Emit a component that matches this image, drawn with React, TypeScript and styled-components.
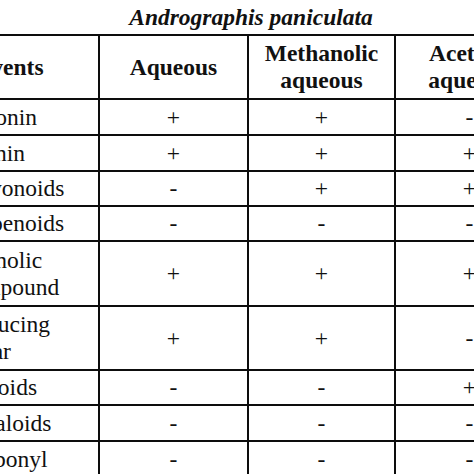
import React from "react";
import styled, { createGlobalStyle } from "styled-components";

const GlobalStyle = createGlobalStyle`
  html, body {
    margin: 0;
    padding: 0;
    background: #ffffff;
    overflow: hidden;
  }
  body {
    font-family: "Liberation Serif", "Times New Roman", serif;
    color: #111;
  }
`;

const Page = styled.div`
  width: 596px;
  margin-left: -51px;
`;

const Title = styled.div`
  height: 34px;
  line-height: 34px;
  padding-left: 8px;
  text-align: center;
  font-size: 23.5px;
  font-weight: 700;
  font-style: italic;
  white-space: nowrap;
`;

const Grid = styled.div`
  display: grid;
  grid-template-columns: 147px 147px 145px 147px;
  grid-template-rows: 62px 34px 34px 33px 33px 63px 62px 33px 34px 34px;
  gap: 2px;
  padding: 2px;
  background: #0d0d0d;
`;

const Cell = styled.div<{ $align?: "left" | "center"; $bold?: boolean }>`
  background: #ffffff;
  display: flex;
  flex-direction: column;
  justify-content: center;
  align-items: ${(p) => (p.$align === "left" ? "flex-start" : "center")};
  padding-left: ${(p) => (p.$align === "left" ? "9px" : "0")};
  text-align: ${(p) => p.$align ?? "center"};
  font-size: 23.5px;
  line-height: 27px;
  font-weight: ${(p) => (p.$bold ? 700 : 400)};
  white-space: nowrap;
`;

const headers = ["Aqueous", "Methanolic\naqueous", "Acetone\naqueous"];

const rows: { name: string; values: string[] }[] = [
  { name: "Saponin", values: ["+", "+", "-"] },
  { name: "Tannin", values: ["+", "+", "+"] },
  { name: "Flavonoids", values: ["-", "+", "+"] },
  { name: "Terpenoids", values: ["-", "-", "-"] },
  { name: "Phenolic\ncompound", values: ["+", "+", "+"] },
  { name: "Reducing\nsugar", values: ["+", "+", "-"] },
  { name: "Steroids", values: ["-", "-", "+"] },
  { name: "Alkaloids", values: ["-", "-", "-"] },
  { name: "Carbonyl", values: ["-", "-", "-"] },
];

const Lines: React.FC<{ text: string }> = ({ text }) => (
  <>
    {text.split("\n").map((line, i) => (
      <span key={i}>{line}</span>
    ))}
  </>
);

export default function App() {
  return (
    <>
      <GlobalStyle />
      <Page>
        <Title>Andrographis paniculata</Title>
        <Grid>
          <Cell $align="left" $bold>
            Solvents
          </Cell>
          {headers.map((h) => (
            <Cell key={h} $bold>
              <Lines text={h} />
            </Cell>
          ))}
          {rows.map((r) => (
            <React.Fragment key={r.name}>
              <Cell $align="left">
                <Lines text={r.name} />
              </Cell>
              {r.values.map((v, i) => (
                <Cell key={i}>{v}</Cell>
              ))}
            </React.Fragment>
          ))}
        </Grid>
      </Page>
    </>
  );
}
